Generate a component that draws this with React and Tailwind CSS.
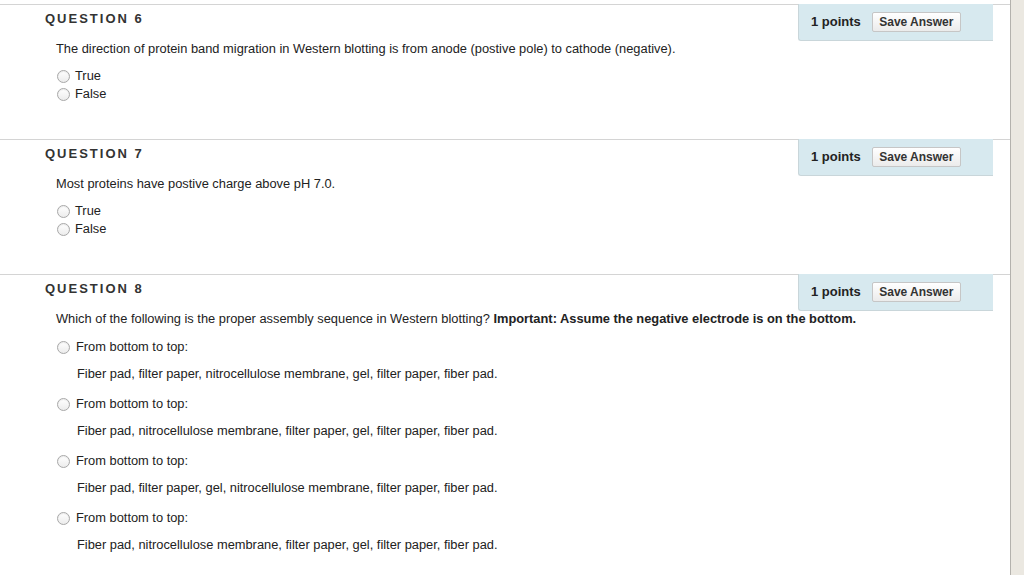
import React from 'react';

const QUESTIONS = [
  {
    num: 6,
    text: <>The direction of protein band migration in Western blotting is from anode (postive pole) to cathode (negative).</>,
    options: [{ label: 'True' }, { label: 'False' }],
  },
  {
    num: 7,
    text: <>Most proteins have postive charge above pH 7.0.</>,
    options: [{ label: 'True' }, { label: 'False' }],
  },
  {
    num: 8,
    text: (
      <>
        Which of the following is the proper assembly sequence in Western blotting?{' '}
        <b>Important: Assume the negative electrode is on the bottom.</b>
      </>
    ),
    options: [
      { label: 'From bottom to top:', detail: 'Fiber pad, filter paper, nitrocellulose membrane, gel, filter paper, fiber pad.' },
      { label: 'From bottom to top:', detail: 'Fiber pad, nitrocellulose membrane, filter paper, gel, filter paper, fiber pad.' },
      { label: 'From bottom to top:', detail: 'Fiber pad, filter paper, gel, nitrocellulose membrane, filter paper, fiber pad.' },
      { label: 'From bottom to top:', detail: 'Fiber pad, nitrocellulose membrane, filter paper, gel, filter paper, fiber pad.' },
    ],
  },
];

function Radio() {
  return (
    <span className="inline-block w-[13px] h-[13px] rounded-full border border-[#a8a8a8] bg-gradient-to-b from-white to-[#ececec] shadow-[inset_0_1px_1px_rgba(0,0,0,0.08)] shrink-0" />
  );
}

function Question({ q }) {
  const long = q.options.some(o => o.detail);
  return (
    <div className={`border-t border-[#d4d4d4] ${long ? '' : 'h-[135px]'}`}>
      {/* Header */}
      <div className="flex justify-between items-start h-[36px]">
        <h3 className="pl-[45px] pt-[6px] text-[13px] leading-[16px] font-bold tracking-[2px] text-[#333]">
          QUESTION {q.num}
        </h3>
        <div className="mr-[17px] -mt-px w-[195px] h-[37px] bg-[#d7e9ef] border-l border-b border-[#c9d6da] rounded-bl-[3px] flex items-center pl-[12px] gap-[11px]">
          <span className="text-[13px] font-bold text-[#222]">1 points</span>
          <button className="h-[20px] w-[89px] rounded-[2px] border border-[#c6c6c6] bg-gradient-to-b from-white to-[#ebebeb] text-[12px] font-bold text-[#333] leading-none">
            Save Answer
          </button>
        </div>
      </div>

      <p className="pl-[56px] text-[12.85px] leading-[16px] text-[#222]">{q.text}</p>

      {long ? (
        <div className="pl-[57px] pb-[20px] pt-[11px] flex flex-col gap-[12px]">
          {q.options.map((o, i) => (
            <div key={i}>
              <label className="flex items-center gap-[6px] h-[18px] text-[12.85px] text-[#222]">
                <Radio />
                <span>{o.label}</span>
              </label>
              <p className="mt-[9px] pl-[20px] h-[18px] leading-[18px] text-[12.85px] text-[#222]">{o.detail}</p>
            </div>
          ))}
        </div>
      ) : (
        <div className="pl-[57px] mt-[10px]">
          {q.options.map((o, i) => (
            <label key={i} className="flex items-center gap-[5px] h-[18px] text-[12.85px] text-[#222]">
              <Radio />
              <span>{o.label}</span>
            </label>
          ))}
        </div>
      )}
    </div>
  );
}

export default function App() {
  return (
    <div className="flex h-[575px] overflow-hidden font-['Liberation_Sans',Arial,sans-serif]">
      <main className="w-[1011px] bg-white border-r border-[#b4b2ad] pt-[4px]">
        {QUESTIONS.map(q => (
          <Question key={q.num} q={q} />
        ))}
      </main>
      <aside className="flex-1 bg-[#ebe8e1]" />
    </div>
  );
}
